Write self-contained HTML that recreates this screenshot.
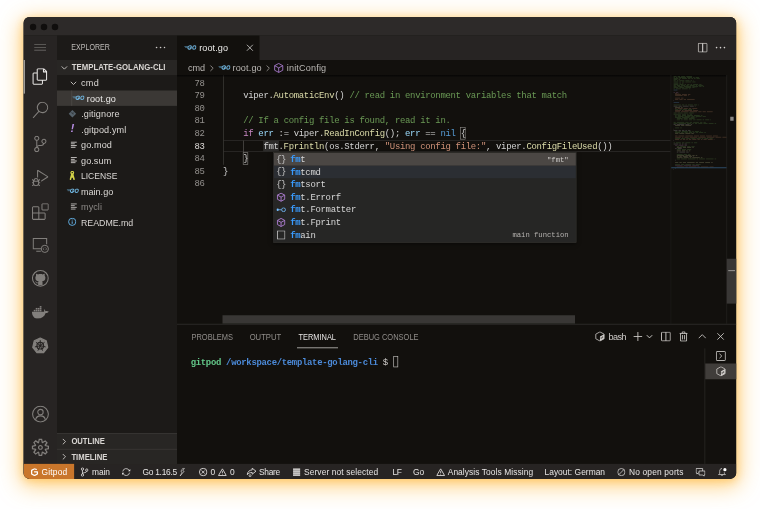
<!DOCTYPE html>
<html lang="en"><head><meta charset="utf-8"><title>root.go — template-golang-cli — Gitpod Code</title>
<style>
html,body{margin:0;padding:0;background:#fff;}
body{width:760px;height:509px;overflow:hidden;position:relative;}
#sc{position:absolute;left:0;top:0;width:6080px;height:4072px;transform:scale(0.125);transform-origin:0 0;will-change:transform;}
#win{position:absolute;left:188px;top:136px;width:5702.4px;height:3695.2px;border-radius:48px;overflow:hidden;background:#12100d;
box-shadow:0 40px 176px 16px rgba(255,178,40,.58),0 16px 72px rgba(255,174,40,.45);}
#in{position:absolute;left:-188px;top:-136px;width:6080px;height:4072px;}
#in div,#in span,#in svg{position:absolute;}
#in span{white-space:pre;}
.s{font-family:"Liberation Sans", sans-serif;}
.m{font-family:"Liberation Mono", monospace;}
#in span i{font-style:normal;}
</style></head><body>
<div id="sc"><div id="win"><div id="in">
<div style="left:188px;top:136px;width:5702.4px;height:148.8px;background:#2d2a29;"></div>
<div style="left:239.2px;top:190.4px;width:51.2px;height:51.2px;background:#100e0d;border-radius:50%;"></div>
<div style="left:326.4px;top:190.4px;width:51.2px;height:51.2px;background:#100e0d;border-radius:50%;"></div>
<div style="left:414.4px;top:190.4px;width:51.2px;height:51.2px;background:#100e0d;border-radius:50%;"></div>
<div style="left:188px;top:284.8px;width:268px;height:3430.4px;background:#272423;"></div>
<div style="left:456px;top:284.8px;width:960px;height:3430.4px;background:#1c1a18;"></div>
<div style="left:1416px;top:284.8px;width:4474.4px;height:195.2px;background:#272423;"></div>
<div style="left:1416px;top:284.8px;width:660px;height:203.2px;background:#12100d;"></div>
<div style="left:188px;top:3711.2px;width:5702.4px;height:128px;background:#272423;"></div>
<div style="left:274.4px;top:353.6px;width:93.6px;height:6.4px;background:#6b6866;"></div>
<div style="left:274.4px;top:376px;width:93.6px;height:6.4px;background:#6b6866;"></div>
<div style="left:274.4px;top:398.4px;width:93.6px;height:6.4px;background:#6b6866;"></div>
<span id="t1" class="s" style="left:570px;top:326.4px;font-size:67.2px;line-height:100.8px;color:#bdbab7;transform:scaleX(0.8471);transform-origin:0 50%;">EXPLORER</span>
<div style="left:1246.4px;top:372.8px;width:12.8px;height:12.8px;background:#cfccc9;border-radius:50%;"></div>
<div style="left:1278.4px;top:372.8px;width:12.8px;height:12.8px;background:#cfccc9;border-radius:50%;"></div>
<div style="left:1309.6px;top:372.8px;width:12.8px;height:12.8px;background:#cfccc9;border-radius:50%;"></div>
<div style="left:456px;top:480px;width:960px;height:120px;background:#282624;"></div>
<span id="t2" class="s" style="left:574px;top:488.4px;font-size:67.2px;line-height:100.8px;color:#d9d6d3;font-weight:700;transform:scaleX(0.9318);transform-origin:0 50%;">TEMPLATE-GOLANG-CLI</span>
<svg style="left:483.2px;top:508.8px;" width="64" height="64" viewBox="0 0 8 8"><path d="M1.3 2.8 L4 5.5 L6.7 2.8" fill="none" stroke="#c4c1be" stroke-width="0.95"/></svg>
<div style="left:456px;top:723.8px;width:960px;height:123.6px;background:#3b3835;"></div>
<div style="left:572px;top:723.8px;width:5.2px;height:123.6px;background:#524f4c;"></div>
<svg style="left:556px;top:631.6px;" width="64" height="64" viewBox="0 0 8 8"><path d="M1.3 2.8 L4 5.5 L6.7 2.8" fill="none" stroke="#c4c1be" stroke-width="0.95"/></svg>
<span id="t3" class="s" style="left:648px;top:611.4px;font-size:72.8px;line-height:109.2px;color:#dbd8d5;letter-spacing:2.6px;">cmd</span>
<span id="t4" class="s" style="left:694px;top:733.4px;font-size:72.8px;line-height:109.2px;color:#ecebe9;letter-spacing:1.1px;">root.go</span>
<span id="t5" class="s" style="left:650px;top:858.6px;font-size:72.8px;line-height:109.2px;color:#dbd8d5;letter-spacing:0.7px;">.gitignore</span>
<span id="t6" class="s" style="left:650px;top:982.2px;font-size:72.8px;line-height:109.2px;color:#dbd8d5;letter-spacing:0.8px;">.gitpod.yml</span>
<span id="t7" class="s" style="left:648px;top:1105.8px;font-size:72.8px;line-height:109.2px;color:#dbd8d5;letter-spacing:0.9px;">go.mod</span>
<span id="t8" class="s" style="left:648px;top:1229.4px;font-size:72.8px;line-height:109.2px;color:#dbd8d5;letter-spacing:0.6px;">go.sum</span>
<span id="t9" class="s" style="left:648px;top:1353px;font-size:72.8px;line-height:109.2px;color:#dbd8d5;transform:scaleX(0.9347);transform-origin:0 50%;">LICENSE</span>
<span id="t10" class="s" style="left:648px;top:1476.6px;font-size:72.8px;line-height:109.2px;color:#dbd8d5;letter-spacing:-0.2px;">main.go</span>
<span id="t11" class="s" style="left:648px;top:1600.2px;font-size:72.8px;line-height:109.2px;color:#8b8885;letter-spacing:0.5px;">mycli</span>
<span id="t12" class="s" style="left:648px;top:1723.8px;font-size:72.8px;line-height:109.2px;color:#dbd8d5;transform:scaleX(0.9649);transform-origin:0 50%;">README.md</span>
<svg style="left:578.4px;top:761.9px;" width="98.4" height="41" viewBox="0 0 24 10"><g transform="skewX(-10) translate(1 0)"><g fill="none" stroke="#6fb4de" stroke-width="2" stroke-linecap="round"><path d="M13.6 2.9 A3.5 3.4 0 1 0 14.2 5.6 L11.4 5.6"/><ellipse cx="19.6" cy="5" rx="3.1" ry="3.5"/></g><g stroke="#6fb4de" stroke-width="0.9" stroke-linecap="round"><path d="M0.6 3.1 H6.4 M2.6 5 H6"/></g></g></svg>
<svg style="left:532.8px;top:1505.1px;" width="98.4" height="41" viewBox="0 0 24 10"><g transform="skewX(-10) translate(1 0)"><g fill="none" stroke="#6fb4de" stroke-width="2" stroke-linecap="round"><path d="M13.6 2.9 A3.5 3.4 0 1 0 14.2 5.6 L11.4 5.6"/><ellipse cx="19.6" cy="5" rx="3.1" ry="3.5"/></g><g stroke="#6fb4de" stroke-width="0.9" stroke-linecap="round"><path d="M0.6 3.1 H6.4 M2.6 5 H6"/></g></g></svg>
<svg style="left:546.4px;top:874px;" width="66.4" height="70.4" viewBox="0 0 8 8"><path d="M4 0.4 L7.6 4 L4 7.6 L0.4 4 Z" fill="#56626b"/><path d="M2.6 2.6 L4.6 4.6 M4.6 4.6 V2.6" stroke="#2a2e31" stroke-width="0.7" fill="none"/></svg>
<span id="t13" class="s" style="left:564.8px;top:958.4px;font-size:92.8px;line-height:139.2px;color:#b38ade;font-weight:700;font-style:italic;">!</span>
<div style="left:567.2px;top:1133.6px;width:47.2px;height:7.2px;background:#cdcac7;"></div>
<div style="left:567.2px;top:1147.2px;width:31.2px;height:7.2px;background:#cdcac7;"></div>
<div style="left:567.2px;top:1160.8px;width:47.2px;height:7.2px;background:#cdcac7;"></div>
<div style="left:567.2px;top:1174.4px;width:36.8px;height:7.2px;background:#cdcac7;"></div>
<div style="left:567.2px;top:1257.2px;width:47.2px;height:7.2px;background:#cdcac7;"></div>
<div style="left:567.2px;top:1270.8px;width:31.2px;height:7.2px;background:#cdcac7;"></div>
<div style="left:567.2px;top:1284.4px;width:47.2px;height:7.2px;background:#cdcac7;"></div>
<div style="left:567.2px;top:1298px;width:36.8px;height:7.2px;background:#cdcac7;"></div>
<div style="left:567.2px;top:1628px;width:47.2px;height:7.2px;background:#bebbb8;"></div>
<div style="left:567.2px;top:1641.6px;width:31.2px;height:7.2px;background:#bebbb8;"></div>
<div style="left:567.2px;top:1655.2px;width:47.2px;height:7.2px;background:#bebbb8;"></div>
<div style="left:567.2px;top:1668.8px;width:36.8px;height:7.2px;background:#bebbb8;"></div>
<svg style="left:554.4px;top:1368.4px;" width="48" height="70.4" viewBox="0 0 6 8.8"><circle cx="3" cy="1.8" r="1.35" fill="none" stroke="#d2d248" stroke-width="1.2"/><path d="M2.6 3.2 L1.2 8.2 M3.4 3.2 L4.8 8.2 M3 3 V6" stroke="#d2d248" stroke-width="1.55" fill="none" stroke-linecap="round"/></svg>
<svg style="left:544px;top:1740.8px;" width="67.2" height="67.2" viewBox="0 0 8.4 8.4"><circle cx="4.2" cy="4.2" r="3.6" fill="none" stroke="#62aee2" stroke-width="0.95"/><path d="M4.2 3.7 V6.2" stroke="#62aee2" stroke-width="1"/><circle cx="4.2" cy="2.4" r="0.6" fill="#62aee2"/></svg>
<div style="left:456px;top:3464.8px;width:960px;height:250.4px;background:#282624;"></div>
<div style="left:456px;top:3464.8px;width:960px;height:6px;background:#3b3937;"></div>
<div style="left:456px;top:3591.2px;width:960px;height:6px;background:#3b3937;"></div>
<svg style="left:480px;top:3500.8px;" width="64" height="64" viewBox="0 0 8 8"><path d="M2.8 1.3 L5.5 4 L2.8 6.7" fill="none" stroke="#c4c1be" stroke-width="0.95"/></svg>
<svg style="left:480px;top:3621.6px;" width="64" height="64" viewBox="0 0 8 8"><path d="M2.8 1.3 L5.5 4 L2.8 6.7" fill="none" stroke="#c4c1be" stroke-width="0.95"/></svg>
<span id="t14" class="s" style="left:571.2px;top:3482.4px;font-size:67.2px;line-height:100.8px;color:#d9d6d3;font-weight:700;transform:scaleX(0.9116);transform-origin:0 50%;">OUTLINE</span>
<span id="t15" class="s" style="left:571.2px;top:3603.2px;font-size:67.2px;line-height:100.8px;color:#d9d6d3;font-weight:700;transform:scaleX(0.9211);transform-origin:0 50%;">TIMELINE</span>
<div style="left:188px;top:480px;width:9.6px;height:268.8px;background:#c4c1be;"></div>
<svg style="left:255.2px;top:546.4px;" width="132.8" height="132.8" viewBox="0 0 24 24"><path fill="#e7e5e4" fill-rule="evenodd" d="M17.5 0h-9L7 1.5V6H2.5L1 7.5v15.07L2.5 24h12.07L16 22.57V18h4.7l1.3-1.43V4.5L17.5 0zm0 2.12l2.38 2.38H17.5V2.12zm-3 20.38h-12v-15H7v9.07L8.5 18h6v4.5zm6-6h-12v-15H16V6h4.5v10.5z"/></svg>
<svg style="left:256px;top:814.4px;" width="132.8" height="132.8" viewBox="0 0 24 24"><path fill="#827f7c" fill-rule="evenodd" d="M15.25 0a8.25 8.25 0 0 0-6.18 13.72L1 22.88l1.12 1.12 8.05-9.12A8.251 8.251 0 1 0 15.25.01V0zm0 15a6.75 6.75 0 1 1 0-13.5 6.75 6.75 0 0 1 0 13.5z"/></svg>
<svg style="left:256.8px;top:1086.4px;" width="131.2" height="131.2" viewBox="0 0 24 24"><path fill="#827f7c" fill-rule="evenodd" d="M21.007 8.222A3.738 3.738 0 0 0 15.045 5.2a3.737 3.737 0 0 0 1.156 6.583 2.988 2.988 0 0 1-2.668 1.67h-2.99a4.456 4.456 0 0 0-2.989 1.165V7.4a3.737 3.737 0 1 0-1.494 0v9.117a3.776 3.776 0 1 0 1.816.099 2.99 2.99 0 0 1 2.668-1.667h2.99a4.484 4.484 0 0 0 4.223-3.039 3.736 3.736 0 0 0 3.25-3.687zM4.565 3.738a2.242 2.242 0 1 1 4.484 0 2.242 2.242 0 0 1-4.484 0zm4.484 16.441a2.242 2.242 0 1 1-4.484 0 2.242 2.242 0 0 1 4.484 0zm8.221-9.715a2.242 2.242 0 1 1 0-4.485 2.242 2.242 0 0 1 0 4.485z"/></svg>
<svg style="left:255.2px;top:1357.6px;" width="132.8" height="132.8" viewBox="0 0 24 24"><path fill="#827f7c" fill-rule="evenodd" d="M10.94 13.5l-1.32 1.32a3.73 3.73 0 0 0-7.24 0L1.06 13.5 0 14.56l1.72 1.72-.22.22V18H0v1.5h1.5v.08c.077.489.214.966.41 1.42L0 22.94 1.06 24l1.65-1.65A4.308 4.308 0 0 0 6 24a4.31 4.31 0 0 0 3.29-1.65L10.94 24 12 22.94 10.09 21c.198-.464.336-.951.41-1.45v-.1H12V18h-1.5v-1.5l-.22-.22L12 14.56l-1.06-1.06zM6 13.5a2.25 2.25 0 0 1 2.25 2.25h-4.5A2.25 2.25 0 0 1 6 13.5zm3 6a3.33 3.33 0 0 1-3 3 3.33 3.33 0 0 1-3-3v-2.25h6v2.25zm14.76-9.9v1.26L13.5 17.37V15.6l8.5-5.37L9 2v9.46a5.07 5.07 0 0 0-1.5-.72V.63L8.64 0l15.12 9.6z"/></svg>
<svg style="left:256px;top:1624.8px;" width="134.4" height="134.4" viewBox="0 0 24 24"><path fill="#827f7c" fill-rule="evenodd" d="M13.5 1.5L15 0h7.5L24 1.5V9l-1.5 1.5H15L13.5 9V1.5zm1.5 0V9h7.5V1.5H15zM0 15V6l1.5-1.5H9L10.5 6v7.5H18l1.5 1.5v7.5L18 24H1.5L0 22.5V15zm9-1.5V6H1.5v7.5H9zM9 15H1.5v7.5H9V15zm1.5 7.5H18V15h-7.5v7.5z"/></svg>
<svg style="left:258.4px;top:1898.4px;" width="136" height="128" viewBox="0 0 17 16"><path d="M9.2 11.4 H1 V1.2 H14.4 V7" fill="none" stroke="#827f7c" stroke-width="1.05"/><path d="M4 14 H8.6" stroke="#827f7c" stroke-width="1.05"/><circle cx="12.6" cy="11.6" r="3.6" fill="none" stroke="#827f7c" stroke-width="1"/><path d="M11.9 10.3 L10.8 11.6 L11.9 12.9 M13.3 10.3 L14.4 11.6 L13.3 12.9" fill="none" stroke="#827f7c" stroke-width="0.7"/></svg>
<svg style="left:253.6px;top:2158.4px;" width="137.6" height="137.6" viewBox="0 0 17.2 17.2"><circle cx="8.6" cy="8.6" r="7.9" fill="none" stroke="#827f7c" stroke-width="1.1"/><path fill="#827f7c" d="M8.6 4.3c-.9 0-1.7.15-2.3.45-.7-.55-1.5-.75-1.9-.7-.25.65-.25 1.35-.05 1.85-.5.6-.75 1.3-.75 2.1 0 2.6 1.6 3.35 3.3 3.6-.3.3-.45.7-.5 1.1-.5.2-1.5.3-2.1-.8-.3-.5-.8-.75-1.2-.7.5.35.6.6.9 1.2.35.9 1.3 1.4 2.4 1.15v1.6c1.4.45 3 .45 4.4 0v-2.3c0-.6-.15-1-.45-1.25 1.7-.25 3.3-1 3.3-3.6 0-.8-.25-1.5-.75-2.1.2-.5.2-1.2-.05-1.85-.4-.05-1.2.15-1.9.7-.6-.3-1.4-.45-2.35-.45z"/></svg>
<svg style="left:254.4px;top:2446.4px;" width="139.2" height="104" viewBox="0 0 17.4 13"><path fill="#827f7c" d="M0.2 5.9 H12.3 C12.6 5 12.5 4.1 12.1 3.4 C13 3.7 13.6 4.6 13.7 5.4 C14.7 5 16 5.1 17 5.8 C16.3 6.9 15.1 7.4 13.9 7.3 C12.7 10.9 10 12.8 6.3 12.8 C2.4 12.8 0.3 10.3 0.2 5.9 Z"/><g fill="#827f7c"><rect x="2" y="4.1" width="1.7" height="1.6"/><rect x="4" y="4.1" width="1.7" height="1.6"/><rect x="6" y="4.1" width="1.7" height="1.6"/><rect x="8" y="4.1" width="1.7" height="1.6"/><rect x="4" y="2.2" width="1.7" height="1.6"/><rect x="6" y="2.2" width="1.7" height="1.6"/><rect x="8" y="2.2" width="1.7" height="1.6"/><rect x="8" y="0.3" width="1.7" height="1.6"/></g></svg>
<svg style="left:254.4px;top:2696px;" width="136" height="139.2" viewBox="0 0 17 17.4"><polygon points="8.50,1.00 14.52,3.90 16.01,10.41 11.84,15.64 5.16,15.64 0.99,10.41 2.48,3.90" fill="#827f7c" stroke="#827f7c" stroke-width="1.2" stroke-linejoin="round"/><circle cx="8.5" cy="8.7" r="3.3" fill="none" stroke="#272423" stroke-width="1.2"/><line x1="8.5" y1="8.7" x2="8.50" y2="3.20" stroke="#272423" stroke-width="1.0"/><line x1="8.5" y1="8.7" x2="12.80" y2="5.27" stroke="#272423" stroke-width="1.0"/><line x1="8.5" y1="8.7" x2="13.86" y2="9.92" stroke="#272423" stroke-width="1.0"/><line x1="8.5" y1="8.7" x2="10.89" y2="13.66" stroke="#272423" stroke-width="1.0"/><line x1="8.5" y1="8.7" x2="6.11" y2="13.66" stroke="#272423" stroke-width="1.0"/><line x1="8.5" y1="8.7" x2="3.14" y2="9.92" stroke="#272423" stroke-width="1.0"/><line x1="8.5" y1="8.7" x2="4.20" y2="5.27" stroke="#272423" stroke-width="1.0"/><circle cx="8.5" cy="8.7" r="1.1" fill="#272423"/></svg>
<svg style="left:255.2px;top:3244px;" width="137.6" height="137.6" viewBox="0 0 17.2 17.2"><circle cx="8.6" cy="8.6" r="7.9" fill="none" stroke="#827f7c" stroke-width="1.05"/><circle cx="8.6" cy="6.6" r="2.7" fill="none" stroke="#827f7c" stroke-width="1.05"/><path d="M3.7 14.4 C4.2 11.6 6.2 10.4 8.6 10.4 C11 10.4 13 11.6 13.5 14.4" fill="none" stroke="#827f7c" stroke-width="1.05"/></svg>
<svg style="left:244.8px;top:3500.8px;" width="156.8" height="156.8" viewBox="0 0 16 16"><path fill="#827f7c" fill-rule="evenodd" d="M9.1 4.4L8.6 2H7.4l-.5 2.4-.7.3-2-1.3-.9.8 1.3 2-.2.7-2.4.5v1.2l2.4.5.3.8-1.3 2 .8.8 2-1.3.8.3.4 2.3h1.2l.5-2.4.8-.3 2 1.3.8-.8-1.3-2 .3-.8 2.3-.4V7.4l-2.4-.5-.3-.8 1.3-2-.8-.8-2 1.3-.7-.2zM9.4 1l.5 2.4L12 2.1l2 2-1.4 2.1 2.4.4v2.8l-2.4.5L14 12l-2 2-2.1-1.4-.5 2.4H6.600l-.5-2.400L4 13.900l-2-2 1.400-2.100L1 9.400V6.600l2.400-.500L2.100 4l2-2 2.100 1.400.400-2.400h2.800zm.6 7c0 1.100-.900 2-2 2s-2-.900-2-2 .900-2 2-2 2 .900 2 2zM8 9c.600 0 1-.400 1-1s-.400-1-1-1-1 .400-1 1 .400 1 1 1z"/></svg>
<svg style="left:1472.8px;top:359.3px;" width="99.2" height="41.3" viewBox="0 0 24 10"><g transform="skewX(-10) translate(1 0)"><g fill="none" stroke="#6fb4de" stroke-width="2" stroke-linecap="round"><path d="M13.6 2.9 A3.5 3.4 0 1 0 14.2 5.6 L11.4 5.6"/><ellipse cx="19.6" cy="5" rx="3.1" ry="3.5"/></g><g stroke="#6fb4de" stroke-width="0.9" stroke-linecap="round"><path d="M0.6 3.1 H6.4 M2.6 5 H6"/></g></g></svg>
<span id="t16" class="s" style="left:1594px;top:327.8px;font-size:72.8px;line-height:109.2px;color:#ecebe9;letter-spacing:0.5px;">root.go</span>
<svg style="left:1967.2px;top:350.4px;" width="64" height="64" viewBox="0 0 8.0 8.0"><path d="M1 1 L7.0 7.0 M7.0 1 L1 7.0" stroke="#d6d3d1" stroke-width="0.8" fill="none"/></svg>
<svg style="left:5582.4px;top:341.6px;" width="78.4" height="78.4" viewBox="0 0 9.8 9.8"><rect x="0.5" y="0.5" width="8.8" height="8.8" rx="0.8" fill="none" stroke="#d0cdca" stroke-width="0.9"/><path d="M4.9 0.5 V9.3" stroke="#d0cdca" stroke-width="1.1"/></svg>
<div style="left:5726.4px;top:374.4px;width:12.8px;height:12.8px;background:#d6d3d0;border-radius:50%;"></div>
<div style="left:5757.6px;top:374.4px;width:12.8px;height:12.8px;background:#d6d3d0;border-radius:50%;"></div>
<div style="left:5788.8px;top:374.4px;width:12.8px;height:12.8px;background:#d6d3d0;border-radius:50%;"></div>
<span id="t17" class="s" style="left:1504px;top:487.8px;font-size:72.8px;line-height:109.2px;color:#b9b6b3;letter-spacing:-0.6px;">cmd</span>
<svg style="left:1660.8px;top:513.6px;" width="64" height="64" viewBox="0 0 8 8"><path d="M2.8 1.3 L5.5 4 L2.8 6.7" fill="none" stroke="#8f8c89" stroke-width="0.95"/></svg>
<svg style="left:1745.6px;top:519.5px;" width="98.4" height="41" viewBox="0 0 24 10"><g transform="skewX(-10) translate(1 0)"><g fill="none" stroke="#6fb4de" stroke-width="2" stroke-linecap="round"><path d="M13.6 2.9 A3.5 3.4 0 1 0 14.2 5.6 L11.4 5.6"/><ellipse cx="19.6" cy="5" rx="3.1" ry="3.5"/></g><g stroke="#6fb4de" stroke-width="0.9" stroke-linecap="round"><path d="M0.6 3.1 H6.4 M2.6 5 H6"/></g></g></svg>
<span id="t18" class="s" style="left:1860px;top:487.8px;font-size:72.8px;line-height:109.2px;color:#b9b6b3;letter-spacing:1.1px;">root.go</span>
<svg style="left:2111.2px;top:513.6px;" width="64" height="64" viewBox="0 0 8 8"><path d="M2.8 1.3 L5.5 4 L2.8 6.7" fill="none" stroke="#8f8c89" stroke-width="0.95"/></svg>
<svg style="left:2188.4px;top:502.4px;" width="83.2" height="83.2" viewBox="0 0 10 10"><path d="M5 0.7 L8.9 2.8 V7.2 L5 9.3 L1.1 7.2 V2.8 Z M1.1 2.8 L5 4.9 L8.9 2.8 M5 4.9 V9.3" fill="none" stroke="#b180d7" stroke-width="0.8" stroke-linejoin="round"/></svg>
<span id="t19" class="s" style="left:2294px;top:487.8px;font-size:72.8px;line-height:109.2px;color:#b9b6b3;letter-spacing:1.3px;">initConfig</span>
<div style="left:1788.8px;top:1121.6px;width:3576px;height:6px;background:#2f2d2b;"></div>
<div style="left:1788.8px;top:1209.2px;width:3576px;height:6px;background:#2f2d2b;"></div>
<div style="left:2104.7px;top:1124.8px;width:126.1px;height:87.2px;background:#2d2c2b;"></div>
<div style="left:1784.8px;top:600px;width:5.2px;height:718px;background:#44423f;"></div>
<div style="left:1946.8px;top:1124.8px;width:5.2px;height:94.4px;background:#5e5b58;"></div>
<span id="t20" class="m" style="left:1555.2px;top:614.8px;font-size:71.6px;line-height:100.8px;color:#93908d;letter-spacing:-2.5px;">78</span>
<span id="t21" class="m" style="left:1555.2px;top:715.6px;font-size:71.6px;line-height:100.8px;color:#93908d;letter-spacing:-2.5px;">79</span>
<span id="t22" class="m" style="left:1555.2px;top:816.4px;font-size:71.6px;line-height:100.8px;color:#93908d;letter-spacing:-2.5px;">80</span>
<span id="t23" class="m" style="left:1555.2px;top:917.2px;font-size:71.6px;line-height:100.8px;color:#93908d;letter-spacing:-2.5px;">81</span>
<span id="t24" class="m" style="left:1555.2px;top:1018px;font-size:71.6px;line-height:100.8px;color:#93908d;letter-spacing:-2.5px;">82</span>
<span id="t25" class="m" style="left:1555.2px;top:1118.8px;font-size:71.6px;line-height:100.8px;color:#dedbd8;letter-spacing:-2.5px;">83</span>
<span id="t26" class="m" style="left:1555.2px;top:1219.6px;font-size:71.6px;line-height:100.8px;color:#93908d;letter-spacing:-2.5px;">84</span>
<span id="t27" class="m" style="left:1555.2px;top:1320.4px;font-size:71.6px;line-height:100.8px;color:#93908d;letter-spacing:-2.5px;">85</span>
<span id="t28" class="m" style="left:1555.2px;top:1421.2px;font-size:71.6px;line-height:100.8px;color:#93908d;letter-spacing:-2.5px;">86</span>
<span id="t29" class="m" style="left:1945.3px;top:715.6px;font-size:71.6px;line-height:100.8px;color:#d4d4d4;letter-spacing:-2.5px;">viper.<i style="color:#dcdcaa">AutomaticEnv</i>() <i style="color:#6a9955">// read in environment variables that match</i></span>
<span id="t30" class="m" style="left:1945.3px;top:917.2px;font-size:71.6px;line-height:100.8px;color:#d4d4d4;letter-spacing:-2.5px;"><i style="color:#6a9955">// If a config file is found, read it in.</i></span>
<span id="t31" class="m" style="left:1945.3px;top:1018px;font-size:71.6px;line-height:100.8px;color:#d4d4d4;letter-spacing:-2.5px;"><i style="color:#c586c0">if</i> <i style="color:#9cdcfe">err</i> := viper.<i style="color:#dcdcaa">ReadInConfig</i>(); <i style="color:#9cdcfe">err</i> == <i style="color:#569cd6">nil</i> {</span>
<span id="t32" class="m" style="left:2107.1px;top:1118.8px;font-size:71.6px;line-height:100.8px;color:#d4d4d4;letter-spacing:-2.5px;">fmt.<i style="color:#dcdcaa">Fprintln</i>(os.Stderr, <i style="color:#ce9178">"Using config file:"</i>, viper.<i style="color:#dcdcaa">ConfigFileUsed</i>())</span>
<span id="t33" class="m" style="left:1945.3px;top:1219.6px;font-size:71.6px;line-height:100.8px;color:#d4d4d4;letter-spacing:-2.5px;">}</span>
<span id="t34" class="m" style="left:1783.6px;top:1320.4px;font-size:71.6px;line-height:100.8px;color:#d4d4d4;letter-spacing:-2.5px;">}</span>
<div style="left:3681.5px;top:1017.2px;width:42px;height:98.4px;border:5.6px solid #8a8784;box-sizing:border-box;"></div>
<div style="left:1942.9px;top:1218.8px;width:42px;height:98.4px;border:5.6px solid #8a8784;box-sizing:border-box;"></div>
<div style="left:1416px;top:600px;width:4398.4px;height:20px;background:linear-gradient(#000000aa,#00000000);"></div>
<div style="left:2187.2px;top:1218.4px;width:2424px;height:723.2px;background:#262625;box-shadow:0 8px 32px rgba(0,0,0,.5);border:4.8px solid #35332f;box-sizing:border-box;"></div>
<div style="left:2191.2px;top:1222.4px;width:2416px;height:103.2px;background:#4b4744;"></div>
<div style="left:2191.2px;top:1325.6px;width:2416px;height:100.8px;background:#2b2e33;"></div>
<span id="t35" class="m" style="left:2321.6px;top:1227.2px;font-size:71.6px;line-height:100.8px;color:#d7d7d7;letter-spacing:-2.5px;"><i style="color:#3a9cff;font-weight:700">fm</i>t</span>
<span id="t36" class="m" style="left:2321.6px;top:1328px;font-size:71.6px;line-height:100.8px;color:#d7d7d7;letter-spacing:-2.5px;"><i style="color:#3a9cff;font-weight:700">fm</i>tcmd</span>
<span id="t37" class="m" style="left:2321.6px;top:1428.8px;font-size:71.6px;line-height:100.8px;color:#d7d7d7;letter-spacing:-2.5px;"><i style="color:#3a9cff;font-weight:700">fm</i>tsort</span>
<span id="t38" class="m" style="left:2321.6px;top:1529.6px;font-size:71.6px;line-height:100.8px;color:#d7d7d7;letter-spacing:-2.5px;"><i style="color:#3a9cff;font-weight:700">fm</i>t.Errorf</span>
<span id="t39" class="m" style="left:2321.6px;top:1630.4px;font-size:71.6px;line-height:100.8px;color:#d7d7d7;letter-spacing:-2.5px;"><i style="color:#3a9cff;font-weight:700">fm</i>t.Formatter</span>
<span id="t40" class="m" style="left:2321.6px;top:1731.2px;font-size:71.6px;line-height:100.8px;color:#d7d7d7;letter-spacing:-2.5px;"><i style="color:#3a9cff;font-weight:700">fm</i>t.Fprint</span>
<span id="t41" class="m" style="left:2321.6px;top:1832px;font-size:71.6px;line-height:100.8px;color:#d7d7d7;letter-spacing:-2.5px;"><i style="color:#3a9cff;font-weight:700">fm</i>ain</span>
<span id="t42" class="m" style="left:2210.4px;top:1224.8px;font-size:71.6px;line-height:100.8px;color:#c8c8c8;letter-spacing:-4.8px;">{}</span>
<span id="t43" class="m" style="left:2210.4px;top:1325.6px;font-size:71.6px;line-height:100.8px;color:#c8c8c8;letter-spacing:-4.8px;">{}</span>
<span id="t44" class="m" style="left:2210.4px;top:1426.4px;font-size:71.6px;line-height:100.8px;color:#c8c8c8;letter-spacing:-4.8px;">{}</span>
<svg style="left:2211.2px;top:1540px;" width="75.2" height="75.2" viewBox="0 0 10 10"><path d="M5 0.7 L8.9 2.8 V7.2 L5 9.3 L1.1 7.2 V2.8 Z M1.1 2.8 L5 4.9 L8.9 2.8 M5 4.9 V9.3" fill="none" stroke="#b180d7" stroke-width="0.95" stroke-linejoin="round"/></svg>
<svg style="left:2211.2px;top:1741.6px;" width="75.2" height="75.2" viewBox="0 0 10 10"><path d="M5 0.7 L8.9 2.8 V7.2 L5 9.3 L1.1 7.2 V2.8 Z M1.1 2.8 L5 4.9 L8.9 2.8 M5 4.9 V9.3" fill="none" stroke="#b180d7" stroke-width="0.95" stroke-linejoin="round"/></svg>
<svg style="left:2209.6px;top:1658.4px;" width="80" height="40" viewBox="0 0 10 5"><circle cx="1.4" cy="2.5" r="1.2" fill="#75beff"/><path d="M2.4 2.5 H5.2" stroke="#75beff" stroke-width="0.8"/><circle cx="7.3" cy="2.5" r="1.9" fill="none" stroke="#75beff" stroke-width="0.85"/></svg>
<svg style="left:2216px;top:1843.2px;" width="67.2" height="73.6" viewBox="0 0 8.4 9.2"><rect x="0.5" y="0.5" width="7.4" height="8.2" fill="none" stroke="#c8c8c8" stroke-width="0.8"/></svg>
<span id="t45" class="m" style="left:4376px;top:1227.2px;font-size:57.6px;line-height:100.8px;color:#cfccc9;">"fmt"</span>
<span id="t46" class="m" style="left:4099.5px;top:1832px;font-size:57.6px;line-height:100.8px;color:#b5b2af;">main function</span>
<div style="left:5364.8px;top:600px;width:5.6px;height:1990.4px;background:#1f1d1b;"></div>
<div style="left:5812px;top:600px;width:4.8px;height:1990.4px;background:#262422;"></div>
<div style="left:5814.4px;top:2070.4px;width:84px;height:358.4px;background:#393735;"></div>
<div style="left:5826.4px;top:2161.6px;width:53.6px;height:7.2px;background:#a8a5a2;"></div>
<div style="left:5841.6px;top:934.4px;width:27.2px;height:32px;background:#8a8784;"></div>
<div style="left:1780px;top:2521.6px;width:2820px;height:67.2px;background:#393735;"></div>
<svg style="left:5387.2px;top:608px;opacity:.62;" width="432" height="760" viewBox="0 0 54 95"><rect x="0.00" y="0.00" width="3.19" height="0.48" fill="#4f7a40"/><rect x="4.30" y="0.00" width="2.33" height="0.48" fill="#4f7a40"/><rect x="7.74" y="0.00" width="4.05" height="0.48" fill="#4f7a40"/><rect x="12.90" y="0.00" width="5.77" height="0.48" fill="#4f7a40"/><rect x="0.00" y="1.15" width="1.47" height="0.48" fill="#4f7a40"/><rect x="2.58" y="1.15" width="1.47" height="0.48" fill="#4f7a40"/><rect x="5.16" y="1.15" width="7.49" height="0.48" fill="#4f7a40"/><rect x="13.76" y="1.15" width="4.91" height="0.48" fill="#4f7a40"/><rect x="19.78" y="1.15" width="1.47" height="0.48" fill="#4f7a40"/><rect x="22.36" y="1.15" width="3.19" height="0.48" fill="#4f7a40"/><rect x="0.00" y="2.30" width="4.91" height="0.48" fill="#4f7a40"/><rect x="6.02" y="2.30" width="1.47" height="0.48" fill="#4f7a40"/><rect x="8.60" y="2.30" width="4.91" height="0.48" fill="#4f7a40"/><rect x="14.62" y="2.30" width="2.33" height="0.48" fill="#4f7a40"/><rect x="18.06" y="2.30" width="1.47" height="0.48" fill="#4f7a40"/><rect x="20.64" y="2.30" width="1.47" height="0.48" fill="#4f7a40"/><rect x="23.22" y="2.30" width="3.19" height="0.48" fill="#4f7a40"/><rect x="0.00" y="3.45" width="4.05" height="0.48" fill="#4f7a40"/><rect x="5.16" y="3.45" width="1.47" height="0.48" fill="#4f7a40"/><rect x="0.00" y="4.60" width="2.33" height="0.48" fill="#4f7a40"/><rect x="3.44" y="4.60" width="1.47" height="0.48" fill="#4f7a40"/><rect x="6.02" y="4.60" width="4.91" height="0.48" fill="#4f7a40"/><rect x="12.04" y="4.60" width="4.05" height="0.48" fill="#4f7a40"/><rect x="17.20" y="4.60" width="1.47" height="0.48" fill="#4f7a40"/><rect x="19.78" y="4.60" width="0.61" height="0.48" fill="#4f7a40"/><rect x="0.00" y="5.74" width="4.91" height="0.48" fill="#4f7a40"/><rect x="6.02" y="5.74" width="1.47" height="0.48" fill="#4f7a40"/><rect x="8.60" y="5.74" width="2.33" height="0.48" fill="#4f7a40"/><rect x="12.04" y="5.74" width="5.77" height="0.48" fill="#4f7a40"/><rect x="18.92" y="5.74" width="3.19" height="0.48" fill="#4f7a40"/><rect x="0.00" y="6.89" width="4.91" height="0.48" fill="#4f7a40"/><rect x="6.02" y="6.89" width="1.47" height="0.48" fill="#4f7a40"/><rect x="8.60" y="6.89" width="1.47" height="0.48" fill="#4f7a40"/><rect x="0.00" y="8.04" width="4.91" height="0.48" fill="#4f7a40"/><rect x="6.02" y="8.04" width="4.05" height="0.48" fill="#4f7a40"/><rect x="11.18" y="8.04" width="1.47" height="0.48" fill="#4f7a40"/><rect x="13.76" y="8.04" width="2.33" height="0.48" fill="#4f7a40"/><rect x="17.20" y="8.04" width="1.47" height="0.48" fill="#4f7a40"/><rect x="19.78" y="8.04" width="4.91" height="0.48" fill="#4f7a40"/><rect x="25.80" y="8.04" width="2.33" height="0.48" fill="#4f7a40"/><rect x="0.00" y="9.19" width="2.33" height="0.48" fill="#4f7a40"/><rect x="3.44" y="9.19" width="3.19" height="0.48" fill="#4f7a40"/><rect x="7.74" y="9.19" width="4.05" height="0.48" fill="#4f7a40"/><rect x="12.90" y="9.19" width="2.33" height="0.48" fill="#4f7a40"/><rect x="16.34" y="9.19" width="4.91" height="0.48" fill="#4f7a40"/><rect x="22.36" y="9.19" width="1.47" height="0.48" fill="#4f7a40"/><rect x="24.94" y="9.19" width="4.91" height="0.48" fill="#4f7a40"/><rect x="0.00" y="10.34" width="3.19" height="0.48" fill="#4f7a40"/><rect x="4.30" y="10.34" width="4.91" height="0.48" fill="#4f7a40"/><rect x="10.32" y="10.34" width="7.49" height="0.48" fill="#4f7a40"/><rect x="18.92" y="10.34" width="5.77" height="0.48" fill="#4f7a40"/><rect x="25.80" y="10.34" width="2.33" height="0.48" fill="#4f7a40"/><rect x="29.24" y="10.34" width="1.47" height="0.48" fill="#4f7a40"/><rect x="0.00" y="11.49" width="4.91" height="0.48" fill="#4f7a40"/><rect x="6.02" y="11.49" width="4.91" height="0.48" fill="#4f7a40"/><rect x="12.04" y="11.49" width="5.77" height="0.48" fill="#4f7a40"/><rect x="18.92" y="11.49" width="2.33" height="0.48" fill="#4f7a40"/><rect x="22.36" y="11.49" width="0.61" height="0.48" fill="#4f7a40"/><rect x="0.00" y="12.64" width="1.47" height="0.48" fill="#4f7a40"/><rect x="2.58" y="12.64" width="4.91" height="0.48" fill="#4f7a40"/><rect x="8.60" y="12.64" width="5.77" height="0.48" fill="#4f7a40"/><rect x="15.48" y="12.64" width="1.47" height="0.48" fill="#4f7a40"/><rect x="0.00" y="13.79" width="4.05" height="0.48" fill="#4a78a8"/><rect x="0.00" y="16.08" width="1.47" height="0.48" fill="#8a5f87"/><rect x="2.58" y="16.08" width="2.33" height="0.48" fill="#8a5f87"/><rect x="1.72" y="17.23" width="2.33" height="0.48" fill="#9a6c52"/><rect x="5.16" y="17.23" width="0.61" height="0.48" fill="#9a6c52"/><rect x="1.72" y="18.38" width="5.77" height="0.48" fill="#9a6c52"/><rect x="8.60" y="18.38" width="4.91" height="0.48" fill="#9a6c52"/><rect x="14.62" y="18.38" width="2.33" height="0.48" fill="#9a6c52"/><rect x="1.72" y="19.53" width="7.49" height="0.48" fill="#9a6c52"/><rect x="10.32" y="19.53" width="3.19" height="0.48" fill="#9a6c52"/><rect x="14.62" y="19.53" width="0.61" height="0.48" fill="#9a6c52"/><rect x="1.72" y="21.83" width="4.91" height="0.48" fill="#9a6c52"/><rect x="7.74" y="21.83" width="2.33" height="0.48" fill="#9a6c52"/><rect x="1.72" y="22.98" width="3.19" height="0.48" fill="#9a6c52"/><rect x="6.02" y="22.98" width="3.19" height="0.48" fill="#9a6c52"/><rect x="10.32" y="22.98" width="2.33" height="0.48" fill="#9a6c52"/><rect x="13.76" y="22.98" width="7.49" height="0.48" fill="#9a6c52"/><rect x="0.00" y="24.12" width="0.61" height="0.48" fill="#8c8c8c"/><rect x="0.00" y="26.42" width="5.77" height="0.48" fill="#4a78a8"/><rect x="0.00" y="28.72" width="7.49" height="0.48" fill="#4f7a40"/><rect x="8.60" y="28.72" width="2.33" height="0.48" fill="#4f7a40"/><rect x="12.04" y="28.72" width="1.47" height="0.48" fill="#4f7a40"/><rect x="14.62" y="28.72" width="4.91" height="0.48" fill="#4f7a40"/><rect x="20.64" y="28.72" width="3.19" height="0.48" fill="#4f7a40"/><rect x="24.94" y="28.72" width="0.61" height="0.48" fill="#4f7a40"/><rect x="0.00" y="29.87" width="4.05" height="0.48" fill="#8c8c8c"/><rect x="5.16" y="29.87" width="3.19" height="0.48" fill="#8c8c8c"/><rect x="9.46" y="29.87" width="5.77" height="0.48" fill="#8c8c8c"/><rect x="16.34" y="29.87" width="4.05" height="0.48" fill="#8c8c8c"/><rect x="21.50" y="29.87" width="0.61" height="0.48" fill="#8c8c8c"/><rect x="1.72" y="31.02" width="4.91" height="0.48" fill="#9a9a72"/><rect x="7.74" y="31.02" width="1.47" height="0.48" fill="#9a9a72"/><rect x="1.72" y="32.17" width="1.47" height="0.48" fill="#9a6c52"/><rect x="4.30" y="32.17" width="4.91" height="0.48" fill="#9a6c52"/><rect x="10.32" y="32.17" width="4.05" height="0.48" fill="#9a6c52"/><rect x="15.48" y="32.17" width="2.33" height="0.48" fill="#9a6c52"/><rect x="18.92" y="32.17" width="4.91" height="0.48" fill="#9a6c52"/><rect x="1.72" y="33.31" width="3.19" height="0.48" fill="#4f7a40"/><rect x="6.02" y="33.31" width="2.33" height="0.48" fill="#4f7a40"/><rect x="9.46" y="33.31" width="4.05" height="0.48" fill="#4f7a40"/><rect x="14.62" y="33.31" width="4.05" height="0.48" fill="#4f7a40"/><rect x="19.78" y="33.31" width="0.61" height="0.48" fill="#4f7a40"/><rect x="1.72" y="34.46" width="5.77" height="0.48" fill="#9a6c52"/><rect x="8.60" y="34.46" width="1.47" height="0.48" fill="#9a6c52"/><rect x="11.18" y="34.46" width="7.49" height="0.48" fill="#9a6c52"/><rect x="19.78" y="34.46" width="4.91" height="0.48" fill="#9a6c52"/><rect x="1.72" y="35.61" width="4.91" height="0.48" fill="#9a6c52"/><rect x="7.74" y="35.61" width="7.49" height="0.48" fill="#9a6c52"/><rect x="16.34" y="35.61" width="7.49" height="0.48" fill="#9a6c52"/><rect x="24.94" y="35.61" width="3.19" height="0.48" fill="#9a6c52"/><rect x="29.24" y="35.61" width="3.19" height="0.48" fill="#9a6c52"/><rect x="33.54" y="35.61" width="5.77" height="0.48" fill="#9a6c52"/><rect x="0.00" y="36.76" width="3.19" height="0.48" fill="#4f7a40"/><rect x="4.30" y="36.76" width="4.91" height="0.48" fill="#4f7a40"/><rect x="10.32" y="36.76" width="4.05" height="0.48" fill="#4f7a40"/><rect x="15.48" y="36.76" width="4.91" height="0.48" fill="#4f7a40"/><rect x="0.00" y="37.91" width="7.49" height="0.48" fill="#4f7a40"/><rect x="8.60" y="37.91" width="4.05" height="0.48" fill="#4f7a40"/><rect x="13.76" y="37.91" width="1.47" height="0.48" fill="#4f7a40"/><rect x="16.34" y="37.91" width="2.33" height="0.48" fill="#4f7a40"/><rect x="1.72" y="39.06" width="1.47" height="0.48" fill="#4f7a40"/><rect x="4.30" y="39.06" width="3.19" height="0.48" fill="#4f7a40"/><rect x="8.60" y="39.06" width="4.05" height="0.48" fill="#4f7a40"/><rect x="13.76" y="39.06" width="5.77" height="0.48" fill="#4f7a40"/><rect x="20.64" y="39.06" width="5.77" height="0.48" fill="#4f7a40"/><rect x="27.52" y="39.06" width="1.47" height="0.48" fill="#4f7a40"/><rect x="1.72" y="40.21" width="1.47" height="0.48" fill="#4f7a40"/><rect x="4.30" y="40.21" width="5.77" height="0.48" fill="#4f7a40"/><rect x="11.18" y="40.21" width="5.77" height="0.48" fill="#4f7a40"/><rect x="18.06" y="40.21" width="3.19" height="0.48" fill="#4f7a40"/><rect x="22.36" y="40.21" width="5.77" height="0.48" fill="#4f7a40"/><rect x="29.24" y="40.21" width="3.19" height="0.48" fill="#4f7a40"/><rect x="1.72" y="41.36" width="5.77" height="0.48" fill="#4f7a40"/><rect x="8.60" y="41.36" width="7.49" height="0.48" fill="#4f7a40"/><rect x="17.20" y="41.36" width="4.05" height="0.48" fill="#4f7a40"/><rect x="22.36" y="41.36" width="0.61" height="0.48" fill="#4f7a40"/><rect x="3.44" y="42.50" width="5.77" height="0.48" fill="#4f7a40"/><rect x="10.32" y="42.50" width="4.05" height="0.48" fill="#4f7a40"/><rect x="15.48" y="42.50" width="5.77" height="0.48" fill="#4f7a40"/><rect x="3.44" y="43.65" width="3.19" height="0.48" fill="#4f7a40"/><rect x="7.74" y="43.65" width="1.47" height="0.48" fill="#4f7a40"/><rect x="10.32" y="43.65" width="4.05" height="0.48" fill="#4f7a40"/><rect x="15.48" y="43.65" width="3.19" height="0.48" fill="#4f7a40"/><rect x="19.78" y="43.65" width="2.33" height="0.48" fill="#4f7a40"/><rect x="23.22" y="43.65" width="4.91" height="0.48" fill="#4f7a40"/><rect x="29.24" y="43.65" width="1.47" height="0.48" fill="#4f7a40"/><rect x="31.82" y="43.65" width="4.05" height="0.48" fill="#4f7a40"/><rect x="36.98" y="43.65" width="0.61" height="0.48" fill="#4f7a40"/><rect x="0.00" y="45.95" width="2.33" height="0.48" fill="#4f7a40"/><rect x="3.44" y="45.95" width="7.49" height="0.48" fill="#4f7a40"/><rect x="12.04" y="45.95" width="3.19" height="0.48" fill="#4f7a40"/><rect x="16.34" y="45.95" width="2.33" height="0.48" fill="#4f7a40"/><rect x="19.78" y="45.95" width="5.77" height="0.48" fill="#4f7a40"/><rect x="26.66" y="45.95" width="2.33" height="0.48" fill="#4f7a40"/><rect x="30.10" y="45.95" width="2.33" height="0.48" fill="#4f7a40"/><rect x="0.00" y="47.10" width="4.05" height="0.48" fill="#4f7a40"/><rect x="5.16" y="47.10" width="7.49" height="0.48" fill="#4f7a40"/><rect x="13.76" y="47.10" width="4.05" height="0.48" fill="#4f7a40"/><rect x="18.92" y="47.10" width="1.47" height="0.48" fill="#4f7a40"/><rect x="21.50" y="47.10" width="2.33" height="0.48" fill="#4f7a40"/><rect x="24.94" y="47.10" width="4.05" height="0.48" fill="#4f7a40"/><rect x="30.10" y="47.10" width="4.05" height="0.48" fill="#4f7a40"/><rect x="35.26" y="47.10" width="4.91" height="0.48" fill="#4f7a40"/><rect x="41.28" y="47.10" width="1.47" height="0.48" fill="#4f7a40"/><rect x="0.00" y="48.25" width="2.33" height="0.48" fill="#8c8c8c"/><rect x="3.44" y="48.25" width="7.49" height="0.48" fill="#8c8c8c"/><rect x="12.04" y="48.25" width="4.05" height="0.48" fill="#8c8c8c"/><rect x="17.20" y="48.25" width="1.47" height="0.48" fill="#8c8c8c"/><rect x="1.72" y="49.40" width="4.91" height="0.48" fill="#9a9a72"/><rect x="7.74" y="49.40" width="3.19" height="0.48" fill="#9a9a72"/><rect x="12.04" y="49.40" width="5.77" height="0.48" fill="#9a9a72"/><rect x="1.72" y="51.70" width="4.05" height="0.48" fill="#4f7a40"/><rect x="6.88" y="51.70" width="1.47" height="0.48" fill="#4f7a40"/><rect x="0.00" y="52.84" width="0.61" height="0.48" fill="#8c8c8c"/><rect x="0.00" y="53.99" width="4.05" height="0.48" fill="#8c8c8c"/><rect x="5.16" y="53.99" width="2.33" height="0.48" fill="#8c8c8c"/><rect x="8.60" y="53.99" width="2.33" height="0.48" fill="#8c8c8c"/><rect x="12.04" y="53.99" width="1.47" height="0.48" fill="#8c8c8c"/><rect x="14.62" y="53.99" width="2.33" height="0.48" fill="#8c8c8c"/><rect x="1.72" y="55.14" width="2.33" height="0.48" fill="#4f7a40"/><rect x="5.16" y="55.14" width="2.33" height="0.48" fill="#4f7a40"/><rect x="8.60" y="55.14" width="5.77" height="0.48" fill="#4f7a40"/><rect x="15.48" y="55.14" width="2.33" height="0.48" fill="#4f7a40"/><rect x="18.92" y="55.14" width="1.47" height="0.48" fill="#4f7a40"/><rect x="21.50" y="55.14" width="4.05" height="0.48" fill="#4f7a40"/><rect x="26.66" y="55.14" width="0.61" height="0.48" fill="#4f7a40"/><rect x="1.72" y="56.29" width="4.91" height="0.48" fill="#4f7a40"/><rect x="7.74" y="56.29" width="2.33" height="0.48" fill="#4f7a40"/><rect x="11.18" y="56.29" width="3.19" height="0.48" fill="#4f7a40"/><rect x="15.48" y="56.29" width="3.19" height="0.48" fill="#4f7a40"/><rect x="19.78" y="56.29" width="1.47" height="0.48" fill="#4f7a40"/><rect x="22.36" y="56.29" width="2.33" height="0.48" fill="#4f7a40"/><rect x="25.80" y="56.29" width="4.05" height="0.48" fill="#4f7a40"/><rect x="30.96" y="56.29" width="1.47" height="0.48" fill="#4f7a40"/><rect x="1.72" y="57.44" width="3.19" height="0.48" fill="#9a9a72"/><rect x="6.02" y="57.44" width="4.91" height="0.48" fill="#9a9a72"/><rect x="12.04" y="57.44" width="4.91" height="0.48" fill="#9a9a72"/><rect x="18.06" y="57.44" width="2.33" height="0.48" fill="#9a9a72"/><rect x="1.72" y="59.74" width="2.33" height="0.48" fill="#9a6c52"/><rect x="5.16" y="59.74" width="5.77" height="0.48" fill="#9a6c52"/><rect x="12.04" y="59.74" width="7.49" height="0.48" fill="#9a6c52"/><rect x="20.64" y="59.74" width="4.91" height="0.48" fill="#9a6c52"/><rect x="26.66" y="59.74" width="4.91" height="0.48" fill="#9a6c52"/><rect x="32.68" y="59.74" width="5.77" height="0.48" fill="#9a6c52"/><rect x="39.56" y="59.74" width="4.91" height="0.48" fill="#9a6c52"/><rect x="1.72" y="60.89" width="5.77" height="0.48" fill="#9a6c52"/><rect x="8.60" y="60.89" width="1.47" height="0.48" fill="#9a6c52"/><rect x="11.18" y="60.89" width="4.05" height="0.48" fill="#9a6c52"/><rect x="16.34" y="60.89" width="7.49" height="0.48" fill="#9a6c52"/><rect x="24.94" y="60.89" width="7.49" height="0.48" fill="#9a6c52"/><rect x="33.54" y="60.89" width="7.49" height="0.48" fill="#9a6c52"/><rect x="42.14" y="60.89" width="5.77" height="0.48" fill="#9a6c52"/><rect x="49.02" y="60.89" width="4.05" height="0.48" fill="#9a6c52"/><rect x="1.72" y="62.03" width="4.91" height="0.48" fill="#4f7a40"/><rect x="7.74" y="62.03" width="4.05" height="0.48" fill="#4f7a40"/><rect x="12.90" y="62.03" width="4.05" height="0.48" fill="#4f7a40"/><rect x="18.06" y="62.03" width="4.05" height="0.48" fill="#4f7a40"/><rect x="23.22" y="62.03" width="4.05" height="0.48" fill="#4f7a40"/><rect x="28.38" y="62.03" width="1.47" height="0.48" fill="#4f7a40"/><rect x="30.96" y="62.03" width="4.05" height="0.48" fill="#4f7a40"/><rect x="36.12" y="62.03" width="3.19" height="0.48" fill="#4f7a40"/><rect x="1.72" y="63.18" width="4.05" height="0.48" fill="#9a6c52"/><rect x="6.88" y="63.18" width="1.47" height="0.48" fill="#9a6c52"/><rect x="9.46" y="63.18" width="2.33" height="0.48" fill="#9a6c52"/><rect x="12.90" y="63.18" width="1.47" height="0.48" fill="#9a6c52"/><rect x="15.48" y="63.18" width="2.33" height="0.48" fill="#9a6c52"/><rect x="18.92" y="63.18" width="4.05" height="0.48" fill="#9a6c52"/><rect x="24.08" y="63.18" width="2.33" height="0.48" fill="#9a6c52"/><rect x="27.52" y="63.18" width="1.47" height="0.48" fill="#9a6c52"/><rect x="30.10" y="63.18" width="3.19" height="0.48" fill="#9a6c52"/><rect x="34.40" y="63.18" width="4.91" height="0.48" fill="#9a6c52"/><rect x="40.42" y="63.18" width="0.61" height="0.48" fill="#9a6c52"/><rect x="0.00" y="64.33" width="0.61" height="0.48" fill="#8c8c8c"/><rect x="0.00" y="66.63" width="1.47" height="0.48" fill="#4f7a40"/><rect x="2.58" y="66.63" width="4.91" height="0.48" fill="#4f7a40"/><rect x="8.60" y="66.63" width="2.33" height="0.48" fill="#4f7a40"/><rect x="12.04" y="66.63" width="4.91" height="0.48" fill="#4f7a40"/><rect x="18.06" y="66.63" width="1.47" height="0.48" fill="#4f7a40"/><rect x="20.64" y="66.63" width="3.19" height="0.48" fill="#4f7a40"/><rect x="0.00" y="67.78" width="4.91" height="0.48" fill="#8c8c8c"/><rect x="6.02" y="67.78" width="1.47" height="0.48" fill="#8c8c8c"/><rect x="8.60" y="67.78" width="1.47" height="0.48" fill="#8c8c8c"/><rect x="11.18" y="67.78" width="2.33" height="0.48" fill="#8c8c8c"/><rect x="1.72" y="68.93" width="2.33" height="0.48" fill="#8a5f87"/><rect x="5.16" y="68.93" width="4.91" height="0.48" fill="#8a5f87"/><rect x="11.18" y="68.93" width="2.33" height="0.48" fill="#8a5f87"/><rect x="3.44" y="70.08" width="2.33" height="0.48" fill="#4f7a40"/><rect x="6.88" y="70.08" width="5.77" height="0.48" fill="#4f7a40"/><rect x="13.76" y="70.08" width="3.19" height="0.48" fill="#4f7a40"/><rect x="18.06" y="70.08" width="3.19" height="0.48" fill="#4f7a40"/><rect x="3.44" y="71.22" width="4.91" height="0.48" fill="#9a9a72"/><rect x="9.46" y="71.22" width="3.19" height="0.48" fill="#9a9a72"/><rect x="13.76" y="71.22" width="4.05" height="0.48" fill="#9a9a72"/><rect x="18.92" y="71.22" width="1.47" height="0.48" fill="#9a9a72"/><rect x="1.72" y="72.37" width="1.47" height="0.48" fill="#8c8c8c"/><rect x="4.30" y="72.37" width="4.05" height="0.48" fill="#8c8c8c"/><rect x="3.44" y="73.52" width="4.05" height="0.48" fill="#4f7a40"/><rect x="8.60" y="73.52" width="4.05" height="0.48" fill="#4f7a40"/><rect x="13.76" y="73.52" width="4.05" height="0.48" fill="#4f7a40"/><rect x="3.44" y="74.67" width="4.05" height="0.48" fill="#9a9a72"/><rect x="8.60" y="74.67" width="3.19" height="0.48" fill="#9a9a72"/><rect x="12.90" y="74.67" width="1.47" height="0.48" fill="#9a9a72"/><rect x="15.48" y="74.67" width="1.47" height="0.48" fill="#9a9a72"/><rect x="3.44" y="75.82" width="1.47" height="0.48" fill="#8c8c8c"/><rect x="6.02" y="75.82" width="5.77" height="0.48" fill="#8c8c8c"/><rect x="12.90" y="75.82" width="2.33" height="0.48" fill="#8c8c8c"/><rect x="3.44" y="78.12" width="5.77" height="0.48" fill="#4f7a40"/><rect x="10.32" y="78.12" width="3.19" height="0.48" fill="#4f7a40"/><rect x="14.62" y="78.12" width="2.33" height="0.48" fill="#4f7a40"/><rect x="3.44" y="79.27" width="7.49" height="0.48" fill="#9a9a72"/><rect x="12.04" y="79.27" width="5.77" height="0.48" fill="#9a9a72"/><rect x="18.92" y="79.27" width="2.33" height="0.48" fill="#9a9a72"/><rect x="22.36" y="79.27" width="1.47" height="0.48" fill="#9a9a72"/><rect x="3.44" y="80.41" width="1.47" height="0.48" fill="#9a9a72"/><rect x="6.02" y="80.41" width="2.33" height="0.48" fill="#9a9a72"/><rect x="9.46" y="80.41" width="4.91" height="0.48" fill="#9a9a72"/><rect x="15.48" y="80.41" width="3.19" height="0.48" fill="#9a9a72"/><rect x="19.78" y="80.41" width="0.61" height="0.48" fill="#9a9a72"/><rect x="3.44" y="81.56" width="5.77" height="0.48" fill="#9a9a72"/><rect x="10.32" y="81.56" width="4.91" height="0.48" fill="#9a9a72"/><rect x="16.34" y="81.56" width="1.47" height="0.48" fill="#9a9a72"/><rect x="18.92" y="81.56" width="7.49" height="0.48" fill="#9a9a72"/><rect x="27.52" y="81.56" width="1.47" height="0.48" fill="#9a9a72"/><rect x="3.44" y="82.71" width="3.19" height="0.48" fill="#4f7a40"/><rect x="7.74" y="82.71" width="5.77" height="0.48" fill="#4f7a40"/><rect x="14.62" y="82.71" width="7.49" height="0.48" fill="#4f7a40"/><rect x="23.22" y="82.71" width="1.47" height="0.48" fill="#4f7a40"/><rect x="25.80" y="82.71" width="5.77" height="0.48" fill="#4f7a40"/><rect x="32.68" y="82.71" width="7.49" height="0.48" fill="#4f7a40"/><rect x="41.28" y="82.71" width="1.47" height="0.48" fill="#4f7a40"/><rect x="1.72" y="83.86" width="0.61" height="0.48" fill="#8c8c8c"/><rect x="1.72" y="86.16" width="3.19" height="0.48" fill="#9a9a72"/><rect x="6.02" y="86.16" width="2.33" height="0.48" fill="#9a9a72"/><rect x="9.46" y="86.16" width="3.19" height="0.48" fill="#9a9a72"/><rect x="13.76" y="86.16" width="7.49" height="0.48" fill="#9a9a72"/><rect x="22.36" y="86.16" width="2.33" height="0.48" fill="#9a9a72"/><rect x="25.80" y="86.16" width="4.91" height="0.48" fill="#9a9a72"/><rect x="31.82" y="86.16" width="4.91" height="0.48" fill="#9a9a72"/><rect x="37.84" y="86.16" width="1.47" height="0.48" fill="#9a9a72"/><rect x="1.72" y="88.46" width="4.91" height="0.48" fill="#4f7a40"/><rect x="7.74" y="88.46" width="3.19" height="0.48" fill="#4f7a40"/><rect x="12.04" y="88.46" width="5.77" height="0.48" fill="#4f7a40"/><rect x="18.92" y="88.46" width="2.33" height="0.48" fill="#4f7a40"/><rect x="22.36" y="88.46" width="4.91" height="0.48" fill="#4f7a40"/><rect x="1.72" y="89.60" width="7.49" height="0.48" fill="#8a5f87"/><rect x="10.32" y="89.60" width="7.49" height="0.48" fill="#8a5f87"/><rect x="18.92" y="89.60" width="6.63" height="0.48" fill="#8a5f87"/><rect x="3.44" y="90.75" width="7.49" height="0.48" fill="#9a6c52"/><rect x="12.04" y="90.75" width="2.33" height="0.48" fill="#9a6c52"/><rect x="15.48" y="90.75" width="7.49" height="0.48" fill="#9a6c52"/><rect x="24.08" y="90.75" width="2.33" height="0.48" fill="#9a6c52"/><rect x="27.52" y="90.75" width="7.49" height="0.48" fill="#9a6c52"/><rect x="36.12" y="90.75" width="4.05" height="0.48" fill="#9a6c52"/><rect x="1.72" y="91.90" width="0.61" height="0.48" fill="#8c8c8c"/><rect x="0.00" y="93.05" width="0.61" height="0.48" fill="#8c8c8c"/></svg>
<div style="left:5370.4px;top:1337.6px;width:441.6px;height:8px;background:#2d4a66;"></div>
<div style="left:1416px;top:2590.4px;width:4474.4px;height:7.2px;background:#2b2927;"></div>
<span id="t47" class="s" style="left:1532px;top:2644px;font-size:67.2px;line-height:100.8px;color:#918e8b;transform:scaleX(0.8892);transform-origin:0 50%;">PROBLEMS</span>
<span id="t48" class="s" style="left:1996.8px;top:2644px;font-size:67.2px;line-height:100.8px;color:#918e8b;transform:scaleX(0.9153);transform-origin:0 50%;">OUTPUT</span>
<span id="t49" class="s" style="left:2388px;top:2644px;font-size:67.2px;line-height:100.8px;color:#e7e5e4;transform:scaleX(0.8831);transform-origin:0 50%;">TERMINAL</span>
<span id="t50" class="s" style="left:2825.6px;top:2644px;font-size:67.2px;line-height:100.8px;color:#918e8b;transform:scaleX(0.8912);transform-origin:0 50%;">DEBUG CONSOLE</span>
<div style="left:2376px;top:2779.2px;width:328px;height:6.4px;background:#b5b2af;"></div>
<span id="t51" class="m" style="left:1525.6px;top:2849.6px;font-size:71.6px;line-height:100.8px;color:#d4d4d4;font-weight:700;letter-spacing:-2.5px;"><i style="color:#64c98a">gitpod</i> <i style="color:#4b8ad9">/workspace/template-golang-cli</i></span>
<span id="t52" class="m" style="left:3062px;top:2849.6px;font-size:71.6px;line-height:100.8px;color:#d6d3d1;letter-spacing:-2.5px;">$</span>
<div style="left:3147.2px;top:2849.6px;width:37.6px;height:88px;border:5.6px solid #c8c5c2;box-sizing:border-box;"></div>
<svg style="left:4757.6px;top:2649.6px;" width="83.2" height="83.2" viewBox="0 0 10 10"><path d="M5 0.6 L9 2.8 V7.2 L5 9.4 L1 7.2 V2.8 Z" fill="none" stroke="#d0cdca" stroke-width="0.75" stroke-linejoin="round"/><path d="M5 5 L9 2.8 V7.2 L5 9.4 Z" fill="#d0cdca"/><path d="M6.2 5.6 V7.4 M7.6 4.9 V6.6" stroke="#12100d" stroke-width="0.6"/></svg>
<span id="t53" class="s" style="left:4868.8px;top:2642.2px;font-size:72.8px;line-height:109.2px;color:#d0cdca;letter-spacing:-4.8px;">bash</span>
<svg style="left:5067.2px;top:2656px;" width="72" height="72" viewBox="0 0 9 9"><path d="M4.5 0 V9 M0 4.5 H9" stroke="#d0cdca" stroke-width="0.85"/></svg>
<svg style="left:5164px;top:2659.2px;" width="64" height="64" viewBox="0 0 8 8"><path d="M1.3 2.8 L4 5.5 L6.7 2.8" fill="none" stroke="#d0cdca" stroke-width="0.95"/></svg>
<svg style="left:5288px;top:2652.8px;" width="78.4" height="78.4" viewBox="0 0 9.8 9.8"><rect x="0.5" y="0.5" width="8.8" height="8.8" rx="0.8" fill="none" stroke="#d0cdca" stroke-width="0.9"/><path d="M4.9 0.5 V9.3" stroke="#d0cdca" stroke-width="0.9"/></svg>
<svg style="left:5433.6px;top:2649.6px;" width="68.8" height="83.2" viewBox="0 0 8.6 10.4"><path d="M0.3 2.2 H8.3 M3 2.2 V0.6 H5.6 V2.2 M1.3 2.2 V9.8 H7.3 V2.2 M3.3 3.8 V8.2 M5.3 3.8 V8.2" fill="none" stroke="#d0cdca" stroke-width="0.85"/></svg>
<svg style="left:5586.4px;top:2665.6px;" width="64" height="48" viewBox="0 0 8 6"><path d="M0.4 5 L4 1.4 L7.6 5" fill="none" stroke="#d0cdca" stroke-width="0.85"/></svg>
<svg style="left:5731.2px;top:2657.6px;" width="67.2" height="67.2" viewBox="0 0 8.4 8.4"><path d="M1 1 L7.4 7.4 M7.4 1 L1 7.4" stroke="#d0cdca" stroke-width="0.85" fill="none"/></svg>
<div style="left:5636px;top:2787.2px;width:5.6px;height:924px;background:#2b2927;"></div>
<svg style="left:5727.2px;top:2808px;" width="80" height="80" viewBox="0 0 10 10"><rect x="0.5" y="0.5" width="9" height="9" rx="0.6" fill="none" stroke="#d0cdca" stroke-width="0.85"/><path d="M3.6 2.8 L5.9 5 L3.6 7.2" fill="none" stroke="#d0cdca" stroke-width="0.85"/></svg>
<div style="left:5641.6px;top:2908px;width:256.8px;height:126.4px;background:#403d3a;"></div>
<svg style="left:5726.4px;top:2928.8px;" width="83.2" height="83.2" viewBox="0 0 10 10"><path d="M5 0.6 L9 2.8 V7.2 L5 9.4 L1 7.2 V2.8 Z" fill="none" stroke="#d0cdca" stroke-width="0.75" stroke-linejoin="round"/><path d="M5 5 L9 2.8 V7.2 L5 9.4 Z" fill="#d0cdca"/><path d="M6.2 5.6 V7.4 M7.6 4.9 V6.6" stroke="#12100d" stroke-width="0.6"/></svg>
<div style="left:188px;top:3711.2px;width:404.8px;height:128px;background:#c9762b;"></div>
<svg style="left:244.8px;top:3745.6px;" width="62.4" height="62.4" viewBox="0 0 7.8 7.8"><path d="M5.6 1.2 L3.9 0.5 L1 2.1 V5.7 L3.9 7.3 L6.8 5.7 V3.6 H3.9" fill="none" stroke="#fff" stroke-width="1.3" stroke-linejoin="round" stroke-linecap="round"/></svg>
<span id="t54" class="s" style="left:332px;top:3730.4px;font-size:67.2px;line-height:100.8px;color:#fff;letter-spacing:1.5px;">Gitpod</span>
<svg style="left:644.8px;top:3737.6px;" width="64" height="76.8" viewBox="0 0 7.4 8.8"><g fill="none" stroke="#e7e5e4" stroke-width="0.75"><circle cx="1.7" cy="1.6" r="1.1"/><circle cx="1.7" cy="7.2" r="1.1"/><circle cx="5.7" cy="2.6" r="1.1"/><path d="M1.7 2.7 V6.1 M5.7 3.7 C5.7 5.2 1.7 4.6 1.7 6.1"/></g></svg>
<span id="t55" class="s" style="left:736px;top:3730.4px;font-size:67.2px;line-height:100.8px;color:#e7e5e4;letter-spacing:-0.9px;">main</span>
<svg style="left:971.2px;top:3743.2px;" width="76.8" height="67.2" viewBox="0 0 9.6 8.4"><g fill="none" stroke="#e7e5e4" stroke-width="0.75"><path d="M1.4 3.6 A3.4 3.4 0 0 1 7.9 2.8"/><path d="M8.2 4.8 A3.4 3.4 0 0 1 1.7 5.6"/></g><path d="M8.9 1.2 V3.4 H6.7 Z M0.7 7.2 V5 H2.9 Z" fill="#e7e5e4"/></svg>
<span id="t56" class="s" style="left:1140px;top:3730.4px;font-size:67.2px;line-height:100.8px;color:#e7e5e4;letter-spacing:-2.2px;">Go 1.16.5</span>
<svg style="left:1433.6px;top:3741.6px;" width="48" height="70.4" viewBox="0 0 6 8.8"><path d="M3.6 0.5 L1.6 3.6 L2.9 4.3 L0.8 8.3 L4.9 3.6 L3.5 3 L5.2 0.5 Z" fill="none" stroke="#e7e5e4" stroke-width="0.6" stroke-linejoin="round"/></svg>
<svg style="left:1591.2px;top:3742.4px;" width="68.8" height="68.8" viewBox="0 0 8.6 8.6"><circle cx="4.3" cy="4.3" r="3.75" fill="none" stroke="#e7e5e4" stroke-width="0.85"/><path d="M2.8 2.8 L5.8 5.8 M5.8 2.8 L2.8 5.8" stroke="#e7e5e4" stroke-width="0.85"/></svg>
<span id="t57" class="s" style="left:1683.2px;top:3730.4px;font-size:67.2px;line-height:100.8px;color:#e7e5e4;">0</span>
<svg style="left:1744px;top:3744.8px;" width="70.4" height="64" viewBox="0 0 8.8 8"><path d="M4.4 0.7 L8.3 7.4 H0.5 Z" fill="none" stroke="#e7e5e4" stroke-width="0.85" stroke-linejoin="round"/><path d="M4.4 3 V5.2" stroke="#e7e5e4" stroke-width="0.8"/><circle cx="4.4" cy="6.2" r="0.4" fill="#e7e5e4"/></svg>
<span id="t58" class="s" style="left:1840px;top:3730.4px;font-size:67.2px;line-height:100.8px;color:#e7e5e4;">0</span>
<svg style="left:1971.2px;top:3740px;" width="81.6" height="76.8" viewBox="0 0 10.2 9.6"><path d="M5.8 0.7 L9.6 3.7 L5.8 6.7 V5 C3.6 5 2.2 5.6 0.8 7.2 C1.2 4.2 3 2.6 5.8 2.4 Z" fill="none" stroke="#e7e5e4" stroke-width="0.85" stroke-linejoin="round"/><circle cx="3.7" cy="8.2" r="1" fill="none" stroke="#e7e5e4" stroke-width="0.7"/></svg>
<span id="t59" class="s" style="left:2072px;top:3730.4px;font-size:67.2px;line-height:100.8px;color:#e7e5e4;letter-spacing:-2.5px;">Share</span>
<svg style="left:2342.4px;top:3744.8px;" width="62.4" height="64" viewBox="0 0 7.8 8"><rect x="0.3" y="0.2" width="7.2" height="1.5" fill="#e7e5e4"/><rect x="0.3" y="2.2" width="7.2" height="1.5" fill="#e7e5e4"/><rect x="0.3" y="4.2" width="7.2" height="1.5" fill="#e7e5e4"/><rect x="0.3" y="6.2" width="7.2" height="1.5" fill="#e7e5e4"/></svg>
<span id="t60" class="s" style="left:2432px;top:3730.4px;font-size:67.2px;line-height:100.8px;color:#e7e5e4;letter-spacing:0.8px;">Server not selected</span>
<span id="t61" class="s" style="left:3140px;top:3730.4px;font-size:67.2px;line-height:100.8px;color:#e7e5e4;letter-spacing:-2.7px;">LF</span>
<span id="t62" class="s" style="left:3304px;top:3730.4px;font-size:67.2px;line-height:100.8px;color:#e7e5e4;letter-spacing:-1.1px;">Go</span>
<svg style="left:3489.6px;top:3744.8px;" width="70.4" height="64" viewBox="0 0 8.8 8"><path d="M4.4 0.7 L8.3 7.4 H0.5 Z" fill="none" stroke="#e7e5e4" stroke-width="0.85" stroke-linejoin="round"/><path d="M4.4 3 V5.2" stroke="#e7e5e4" stroke-width="0.8"/><circle cx="4.4" cy="6.2" r="0.4" fill="#e7e5e4"/></svg>
<span id="t63" class="s" style="left:3581.6px;top:3730.4px;font-size:67.2px;line-height:100.8px;color:#e7e5e4;letter-spacing:0.6px;">Analysis Tools Missing</span>
<span id="t64" class="s" style="left:4356px;top:3730.4px;font-size:67.2px;line-height:100.8px;color:#e7e5e4;letter-spacing:0.2px;">Layout: German</span>
<svg style="left:4938.4px;top:3744px;" width="65.6" height="65.6" viewBox="0 0 8.2 8.2"><circle cx="4.1" cy="4.1" r="3.6" fill="none" stroke="#e7e5e4" stroke-width="0.7"/><path d="M1.6 6.6 L6.6 1.6" stroke="#e7e5e4" stroke-width="0.7"/></svg>
<span id="t65" class="s" style="left:5032px;top:3730.4px;font-size:67.2px;line-height:100.8px;color:#e7e5e4;letter-spacing:1.2px;">No open ports</span>
<svg style="left:5564.8px;top:3744px;" width="78.4" height="68.8" viewBox="0 0 9.8 8.6"><path d="M0.5 0.5 H7 V5 H2.4 L1.3 6.1 V5 H0.5 Z" fill="none" stroke="#e7e5e4" stroke-width="0.7" stroke-linejoin="round"/><path d="M3.4 3 H9.3 V7 H8.4 V8.2 L7.2 7 H3.4 Z" fill="#272423" stroke="#e7e5e4" stroke-width="0.7" stroke-linejoin="round"/></svg>
<svg style="left:5744px;top:3742.4px;" width="72" height="70.4" viewBox="0 0 9 8.8"><path d="M4 0.8 C2.2 0.8 1.7 2.2 1.7 3.6 V5.6 L0.6 6.8 H7.4 L6.3 5.6 V4.6" fill="none" stroke="#e7e5e4" stroke-width="0.7" stroke-linejoin="round"/><path d="M3.2 7.1 C3.3 8 4.7 8 4.8 7.1" fill="none" stroke="#e7e5e4" stroke-width="0.7"/><circle cx="6.9" cy="1.9" r="1.6" fill="#fff"/></svg>
</div></div></div>
</body></html>
